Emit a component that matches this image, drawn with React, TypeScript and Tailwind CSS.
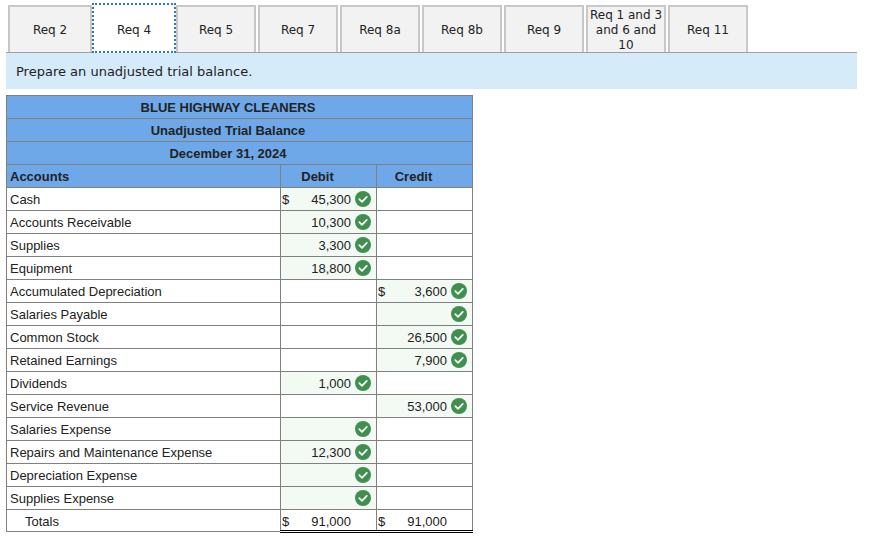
import React from "react";

const tabs = ["Req 2", "Req 4", "Req 5", "Req 7", "Req 8a", "Req 8b", "Req 9", "Req 1 and 3 and 6 and 10", "Req 11"];

type Row = {
  name: string;
  debit?: string;
  credit?: string;
  debitDollar?: boolean;
  creditDollar?: boolean;
  debitCheck?: boolean;
  creditCheck?: boolean;
};

const rows: Row[] = [
  { name: "Cash", debit: "45,300", debitDollar: true, debitCheck: true },
  { name: "Accounts Receivable", debit: "10,300", debitCheck: true },
  { name: "Supplies", debit: "3,300", debitCheck: true },
  { name: "Equipment", debit: "18,800", debitCheck: true },
  { name: "Accumulated Depreciation", credit: "3,600", creditDollar: true, creditCheck: true },
  { name: "Salaries Payable", creditCheck: true },
  { name: "Common Stock", credit: "26,500", creditCheck: true },
  { name: "Retained Earnings", credit: "7,900", creditCheck: true },
  { name: "Dividends", debit: "1,000", debitCheck: true },
  { name: "Service Revenue", credit: "53,000", creditCheck: true },
  { name: "Salaries Expense", debitCheck: true },
  { name: "Repairs and Maintenance Expense", debit: "12,300", debitCheck: true },
  { name: "Depreciation Expense", debitCheck: true },
  { name: "Supplies Expense", debitCheck: true },
];

function Check() {
  return (
    <svg viewBox="0 0 16 16" className="h-4 w-4 shrink-0">
      <circle cx="8" cy="8" r="8" fill="#3f8f4f" />
      <path d="M4.3 8.2 L7 10.8 L11.8 5.8" fill="none" stroke="#fff" strokeWidth="1.7" strokeLinecap="round" strokeLinejoin="round" />
    </svg>
  );
}

function AmountBody({ value, dollar, check }: { value?: string; dollar?: boolean; check?: boolean }) {
  return (
    <div className="flex items-start gap-[4px] pl-[1px] pr-[5px] pt-[3px]">
      {dollar && <span>$</span>}
      <span className="ml-auto">{value}</span>
      <span className="h-4 w-4 shrink-0">{check && <Check />}</span>
    </div>
  );
}

function Amount(props: { value?: string; dollar?: boolean; check?: boolean }) {
  return (
    <td className={`h-[23px] border border-[#808080] p-0 align-top ${props.check ? "bg-[#f3f9f3]" : "bg-white"}`}>
      <AmountBody {...props} />
    </td>
  );
}

export default function App() {
  return (
    <div className="h-[538px] w-[869px] overflow-hidden bg-white pt-[5px] font-['Liberation_Sans',Arial,sans-serif] text-[13px] leading-[17px] text-[#222]">
      <div className="flex h-[47px] gap-[2px] pl-[8px] font-['DejaVu_Sans',Verdana,sans-serif] text-[12px] leading-[15px]">
        {tabs.map((t, i) => (
          <div
            key={t}
            className={
              i === 1
                ? "relative z-10 -mx-[2px] -mt-[2px] flex h-[50px] w-[84px] items-center justify-center border-2 border-dotted border-[#2f77c4] bg-white pt-[4px] text-center"
                : `flex h-[47px] ${i === 0 ? "w-[84px]" : "w-[80px]"} items-center justify-center border-2 border-b-0 border-[#c8c8c8] bg-[#f2f2f2] px-[1px] pt-[2px] text-center`
            }
          >
            {t}
          </div>
        ))}
      </div>
      <div className="ml-[6px] h-[37px] w-[851px] border-t border-[#a0a0a0] bg-[#d6ebfa] pl-[10px] pt-[10px] font-['DejaVu_Sans',Verdana,sans-serif] text-[13px] leading-[18px]">
        Prepare an unadjusted trial balance.
      </div>
      <table className="ml-[6px] mt-[6px] w-[466px] table-fixed border-collapse">
        <colgroup>
          <col className="w-[274px]" />
          <col className="w-[96px]" />
          <col className="w-[96px]" />
        </colgroup>
        <tbody>
          {["BLUE HIGHWAY CLEANERS", "Unadjusted Trial Balance", "December 31, 2024"].map((t) => (
            <tr key={t}>
              <td colSpan={3} className="h-[23px] border border-[#808080] bg-[#6fa8e8] p-0 pr-[23px] text-center font-bold">
                {t}
              </td>
            </tr>
          ))}
          <tr className="bg-[#6fa8e8] font-bold">
            <td className="h-[23px] border border-[#808080] p-0 pl-[3px]">Accounts</td>
            <td className="border border-[#808080] p-0 pr-[22px] text-center">Debit</td>
            <td className="border border-[#808080] p-0 pr-[22px] text-center">Credit</td>
          </tr>
          {rows.map((r) => (
            <tr key={r.name}>
              <td className="h-[23px] border border-[#808080] p-0 pl-[3px]">{r.name}</td>
              <Amount value={r.debit} dollar={r.debitDollar} check={r.debitCheck} />
              <Amount value={r.credit} dollar={r.creditDollar} check={r.creditCheck} />
            </tr>
          ))}
          <tr>
            <td className="h-[22px] border border-[#808080] p-0 pl-[18px] pt-[2px]">Totals</td>
            <td className="border border-[#808080] border-t-black border-b-[3px] border-b-black p-0 align-top [border-bottom-style:double]">
              <AmountBody value="91,000" dollar />
            </td>
            <td className="border border-[#808080] border-t-black border-b-[3px] border-b-black p-0 align-top [border-bottom-style:double]">
              <AmountBody value="91,000" dollar />
            </td>
          </tr>
        </tbody>
      </table>
    </div>
  );
}
